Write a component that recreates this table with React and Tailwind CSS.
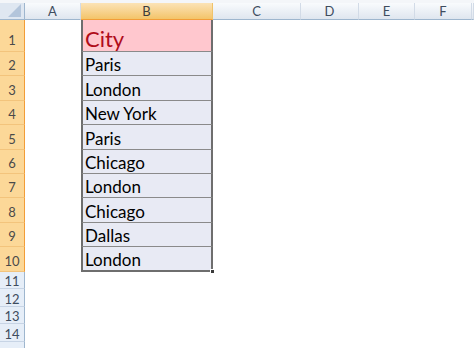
import React from "react";

const cols = ["A", "B", "C", "D", "E", "F", ""];
const cities = ["Paris", "London", "New York", "Paris", "Chicago", "London", "Chicago", "Dallas", "London"];
// row heights: row 1 is tall, rows 2-10 hold the list, the rest are default height
const dataHeights = [24, 25, 24, 25, 24, 24, 25, 24, 25];
const emptyRows = [11, 12, 13, 14, ""];

const font = { fontFamily: "Lato, 'Open Sans', sans-serif" };

const ColHeader = ({ label }) => {
  if (label === "B") {
    return (
      <div className="flex items-center justify-center border-r border-b border-r-[#f0c36a] border-b-[#f29d38] bg-gradient-to-b from-[#fbe3b6] to-[#f3c468] text-[13px] leading-none text-[#3c3c3c]">
        {label}
      </div>
    );
  }
  return (
    <div className="flex items-center justify-center border-r border-b border-r-[#d2dbe7] border-b-[#9eb6ce] bg-gradient-to-b from-[#f9fbfd] to-[#dfe6ef] text-[13px] leading-none text-[#3e4c5e]">
      {label}
    </div>
  );
};

const RowHeader = ({ n, selected, pad = "pb-[3px]" }) => (
  <div
    className={`flex items-end justify-center border-b border-r text-[13px] leading-none ${pad} ${
      selected
        ? "bg-[#fcd898] border-b-[#f3c47c] border-r-[#f29d38] text-[#4a4a4a]"
        : "bg-[#e6eef8] border-b-[#c7d4e5] border-r-[#9eb6ce] text-[#3e4c5e]"
    }`}
  >
    {n}
  </div>
);

const Blank = () => <div className="bg-white" />;

export default function App() {
  return (
    <div className="w-[474px] h-[348px] overflow-hidden bg-white" style={font}>
      <div className="h-[3px] bg-[#f4f6f9]" />
      <div className="grid grid-cols-[25px_56px_132px_88px_58px_56px_57px_1fr]">
        {/* header row */}
        <div className="relative h-[17px] border-r border-b border-r-[#9eb6ce] border-b-[#9eb6ce] bg-[#dfe7f1]">
          <svg className="absolute right-[3px] bottom-[2px]" width="13" height="13" viewBox="0 0 13 13">
            <polygon points="13,0 13,13 0,13" fill="#b3c5db" />
          </svg>
        </div>
        {cols.map((c, i) => (
          <ColHeader key={i} label={c} />
        ))}

        {/* row 1 */}
        <RowHeader n={1} selected pad="pb-[4px]" />
        <Blank />
        <div className="h-[32px] flex items-end pl-[2px] pb-[1px] bg-[#ffc7ce] border-x-2 border-b border-x-[#6e6e6e] border-b-[#8a8a8a] text-[22px] leading-none text-[#b00c1a]">
          City
        </div>
        <Blank />
        <Blank />
        <Blank />
        <Blank />
        <Blank />

        {/* rows 2-10 */}
        {cities.map((city, i) => {
          const last = i === cities.length - 1;
          return (
            <React.Fragment key={i}>
              <RowHeader n={i + 2} selected />
              <Blank />
              <div
                style={{ height: dataHeights[i] }}
                className={`relative flex items-end pl-[2px] pb-[2px] bg-[#e8eaf4] border-x-2 border-x-[#6e6e6e] text-[17px] leading-none text-black ${
                  last ? "border-b-2 border-b-[#6e6e6e]" : "border-b border-b-[#8a8a8a]"
                }`}
              >
                {city}
                {last && (
                  <span className="absolute -right-[4px] -bottom-[4px] w-[5px] h-[5px] bg-[#3a3a3a] border border-white" />
                )}
              </div>
              <Blank />
              <Blank />
              <Blank />
              <Blank />
              <Blank />
            </React.Fragment>
          );
        })}

        {/* rows 11+ */}
        {emptyRows.map((n, i) => (
          <React.Fragment key={i}>
            <RowHeader n={n} pad="pb-0" />
            <div className="h-[17.4px] bg-white" />
            <Blank />
            <Blank />
            <Blank />
            <Blank />
            <Blank />
            <Blank />
          </React.Fragment>
        ))}
      </div>
    </div>
  );
}
